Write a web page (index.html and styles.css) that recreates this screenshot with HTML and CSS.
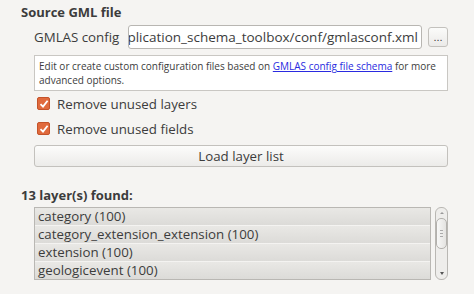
FILE: index.html
```html
<!DOCTYPE html>
<html lang="en">
<head>
  <meta charset="UTF-8" />
  <title>GMLAS import</title>
  <link rel="stylesheet" href="styles.css">
</head>
<body>
  <div class="panel">
    <h3 class="group-title">Source GML file</h3>
    <div class="group-body">
      <div class="config-row">
        <span class="config-label">GMLAS config</span>
        <div class="path-input"><span>plication_schema_toolbox/conf/gmlasconf.xml</span></div>
        <button class="browse">...</button>
      </div>
      <div class="hint">
        Edit or create custom configuration files based on <a href="#">GMLAS config file schema</a> for more<br>advanced options.
      </div>
      <label class="check"><span class="box"><svg width="10" height="10" viewBox="0 0 10 10"><path d="M1.5 5.2 L4 7.6 L8.6 1.8" fill="none" stroke="#fff" stroke-width="1.8"/></svg></span>Remove unused layers</label>
      <label class="check"><span class="box"><svg width="10" height="10" viewBox="0 0 10 10"><path d="M1.5 5.2 L4 7.6 L8.6 1.8" fill="none" stroke="#fff" stroke-width="1.8"/></svg></span>Remove unused fields</label>
      <button class="load">Load layer list</button>
    </div>

    <h3 class="group-title found">13 layer(s) found:</h3>
    <div class="list-wrap">
      <ul class="layer-list">
        <li>category (100)</li>
        <li>category_extension_extension (100)</li>
        <li>extension (100)</li>
        <li>geologicevent (100)</li>
      </ul>
      <div class="scrollbar">
        <span class="arrow up"></span>
        <span class="thumb"><i></i><i></i><i></i></span>
        <span class="arrow down"></span>
      </div>
    </div>
  </div>
</body>
</html>
```

FILE: styles.css
```css
body {
  margin: 0;
  background: #f5f4f2;
  font-family: "Open Sans", sans-serif;
  color: #3c3c3c;
}

.panel {
  padding: 4px 26px 0 21px;
}

.group-title {
  margin: 0;
  font-size: 13px;
  font-weight: bold;
  line-height: 16px;
}

.group-body {
  padding: 5px 0 0 13px;
  display: flex;
  flex-direction: column;
}

.config-row {
  display: flex;
  align-items: center;
  height: 24px;
}

.config-label {
  font-size: 13.3px;
  width: 94px;
}

.path-input {
  width: 289px;
  height: 22px;
  border: 1px solid #b8b6b2;
  border-radius: 3px;
  background: #fff;
  overflow: hidden;
  display: flex;
  justify-content: flex-end;
  align-items: center;
  padding-right: 3px;
  font-size: 13.5px;
  white-space: nowrap;
}

.browse {
  margin-left: 6px;
  width: 20px;
  height: 20px;
  padding: 0;
  border: 1px solid #c3c1bd;
  border-radius: 3px;
  background: linear-gradient(#fbfbfa, #ebeae8);
  font-size: 11px;
  color: #3c3c3c;
  line-height: 14px;
}

.hint {
  margin-top: 6px;
  background: #fff;
  border: 1px solid #c9c7c3;
  padding: 3px 4px;
  font-size: 10px;
  line-height: 14px;
}

.hint a {
  color: #2a2ae0;
}

.check {
  display: flex;
  align-items: center;
  font-size: 13.3px;
  height: 25px;
  padding-left: 3px;
}

.box {
  width: 13px;
  height: 13px;
  border-radius: 2px;
  background: #e06a3d;
  border: 1px solid #c4532a;
  box-sizing: border-box;
  display: flex;
  align-items: center;
  justify-content: center;
  margin-right: 7px;
}

.load {
  margin-top: 4px;
  height: 22px;
  border: 1px solid #c3c1bd;
  border-radius: 3px;
  background: linear-gradient(#fcfcfb, #ecebe9);
  font-family: inherit;
  font-size: 13.3px;
  color: #3c3c3c;
  padding: 0;
}

.found {
  margin-top: 20px;
}

.list-wrap {
  display: flex;
  margin: 4px 0 0 13px;
}

.layer-list {
  list-style: none;
  margin: 0;
  padding: 0;
  width: 399px;
  border: 1px solid #b9b7b3;
  background: #fff;
}

.layer-list li {
  font-size: 13.3px;
  height: 17px;
  line-height: 17px;
  padding-left: 3px;
  background: linear-gradient(#e9e8e5, #dcdbd8);
  border-bottom: 1px solid #f4f3f1;
}

.layer-list li:last-child {
  border-bottom: none;
}

.scrollbar {
  margin-left: 4px;
  width: 11px;
  border: 1px solid #b9b7b3;
  border-radius: 6px;
  background: #eeedeb;
  display: flex;
  flex-direction: column;
  align-items: center;
}

.arrow {
  width: 0;
  height: 0;
  border-left: 2px solid transparent;
  border-right: 2px solid transparent;
  margin: 4px 0;
}

.arrow.up {
  border-bottom: 2px solid #999;
}

.arrow.down {
  margin-top: auto;
  border-top: 3px solid #555;
}

.thumb {
  width: 9px;
  height: 29px;
  border: 1px solid #b3b1ad;
  border-radius: 5px;
  background: linear-gradient(90deg, #f8f8f7, #e4e3e1);
  display: flex;
  flex-direction: column;
  align-items: center;
  justify-content: center;
  gap: 2px;
}

.thumb i {
  width: 3px;
  height: 1px;
  background: #aaa;
}
```
